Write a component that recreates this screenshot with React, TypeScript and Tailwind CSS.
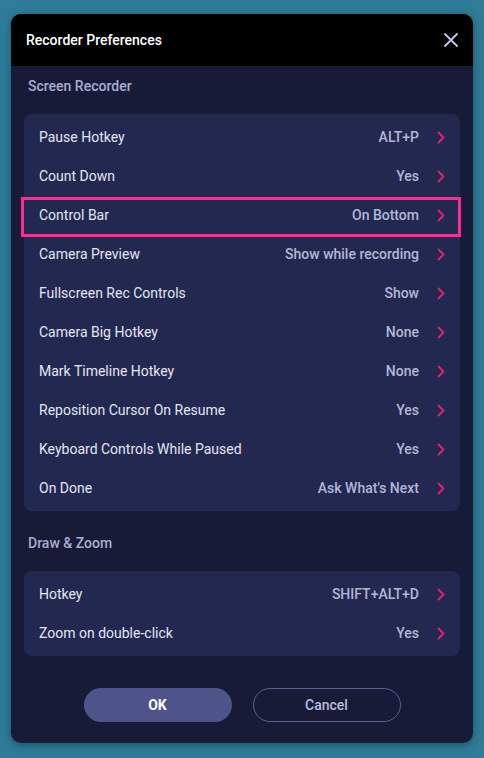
import React from "react"

type Pref = {
    label: string,
    value: string,
    highlight?: boolean
}

const screenPrefs: Pref[] = [
    { label: "Pause Hotkey", value: "ALT+P" },
    { label: "Count Down", value: "Yes" },
    { label: "Control Bar", value: "On Bottom", highlight: true },
    { label: "Camera Preview", value: "Show while recording" },
    { label: "Fullscreen Rec Controls", value: "Show" },
    { label: "Camera Big Hotkey", value: "None" },
    { label: "Mark Timeline Hotkey", value: "None" },
    { label: "Reposition Cursor On Resume", value: "Yes" },
    { label: "Keyboard Controls While Paused", value: "Yes" },
    { label: "On Done", value: "Ask What's Next" },
]

const drawPrefs: Pref[] = [
    { label: "Hotkey", value: "SHIFT+ALT+D" },
    { label: "Zoom on double-click", value: "Yes" },
]

const Chevron = () => (
    <svg width="8" height="13" viewBox="0 0 8 13" fill="none">
        <path d="M1.5 1.5 L6.5 6.5 L1.5 11.5" stroke="#e3236f" strokeWidth="1.8" strokeLinecap="round" strokeLinejoin="round" />
    </svg>
)

const PrefRow = ({ pref }: { pref: Pref }) => (
    <div className="relative flex items-center h-[39px] pl-[15px] pr-[15px]">
        <span className="text-[14px] text-[#e4e6f4]">{pref.label}</span>
        <span className="ml-auto text-[14px] font-medium text-[#b3b7d6]">{pref.value}</span>
        <span className="ml-[18px] flex items-center"><Chevron /></span>
        {pref.highlight && (
            <div className="absolute left-[-3px] right-[-1px] top-[1px] bottom-[-2px] border-[3px] border-[#ff2a92]" />
        )}
    </div>
)

const Section = ({ title, prefs }: { title: string, prefs: Pref[] }) => (
    <div>
        <div className="px-[4px] h-[20px] leading-[20px] text-[14px] font-medium text-[#a9aed0]">{title}</div>
        <div className="mt-[18px] rounded-[8px] bg-[#232850] py-[3.5px]">
            {prefs.map(p => <PrefRow key={p.label} pref={p} />)}
        </div>
    </div>
)

const App = () => {
    return (
        <div className="w-[484px] h-[758px] bg-[#2e7c98] pt-[14px] pl-[11px]" style={{ fontFamily: "Roboto, 'Liberation Sans', sans-serif" }}>
            <div className="w-[462px] h-[729px] rounded-[10px] overflow-hidden bg-[#181b38] shadow-[0_2px_8px_rgba(0,0,0,0.35)] flex flex-col">
                {/* header */}
                <div className="h-[52px] bg-black flex items-center pl-[15px] pr-[15px] shrink-0">
                    <span className="text-[14px] font-medium text-white">Recorder Preferences</span>
                    <svg className="ml-auto" width="14" height="14" viewBox="0 0 14 14">
                        <path d="M1 1 L13 13 M13 1 L1 13" stroke="#c4c8e2" strokeWidth="1.8" strokeLinecap="round" />
                    </svg>
                </div>

                <div className="px-[13px] pt-[10px]">
                    <Section title="Screen Recorder" prefs={screenPrefs} />
                    <div className="mt-[22px]">
                        <Section title="Draw & Zoom" prefs={drawPrefs} />
                    </div>
                </div>

                <div className="mt-[32px] flex justify-center gap-[21px]">
                    <button className="w-[148px] h-[34px] rounded-full bg-[#4e5489] text-white text-[14px] font-bold">
                        OK
                    </button>
                    <button className="w-[148px] h-[34px] rounded-full border border-[#5b6190] text-[#b9bdda] text-[14px] font-medium">
                        Cancel
                    </button>
                </div>
            </div>
        </div>
    )
}

export default App
